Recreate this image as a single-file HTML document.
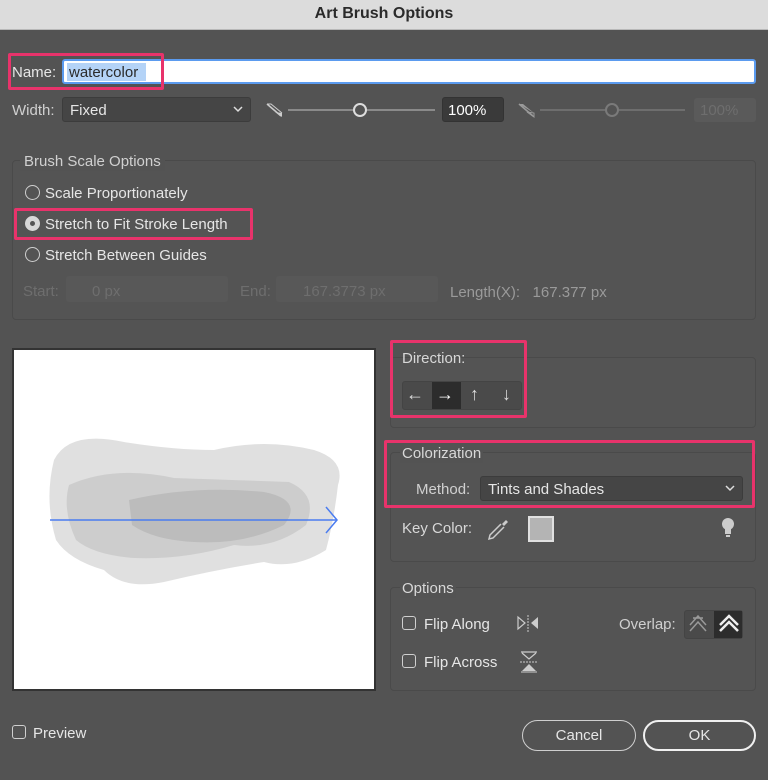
<!DOCTYPE html>
<html><head><meta charset="utf-8"><style>
*{margin:0;padding:0;box-sizing:border-box}
body{width:768px;height:780px;background:#535353;font-family:"Liberation Sans",sans-serif;color:#e6e6e6;position:relative;overflow:hidden;font-size:15px}
.a{position:absolute}
.t{position:absolute;white-space:nowrap;line-height:18px}
.pink{position:absolute;border:3px solid #e8336b;border-radius:2px}
.fs{position:absolute;border:1px solid #4a4a4a;border-radius:4px;background:#545454}
.radio{position:absolute;width:15px;height:15px;border:1.5px solid #cfcfcf;border-radius:50%}
.cb{position:absolute;width:14px;height:14px;border:1.5px solid #cfcfcf;border-radius:3px}
.dim{color:#6e6e6e}
.box{position:absolute;border-radius:3px}
</style></head><body>
<div class="a" style="left:0;top:0;width:768px;height:30px;background:#dcdcdc;border-bottom:1px solid #b8b8b8"></div>
<div class="t" style="left:0;width:768px;top:5px;text-align:center;color:#2a2a2a;font-weight:bold;font-size:16px">Art Brush Options</div>

<div class="t" style="left:12px;top:64px">Name:</div>
<div class="box" style="left:62px;top:59px;width:694px;height:25px;background:#fff;border:2px solid #5b9bef;border-radius:3px"></div>
<div class="a" style="left:67px;top:63px;width:79px;height:18px;background:#b4d3f7"></div>
<div class="t" style="left:69px;top:64px;color:#2a2a2a">watercolor</div>
<div class="pink" style="left:8px;top:53px;width:156px;height:37px"></div>

<div class="t" style="left:12px;top:102px;color:#d0d0d0">Width:</div>
<div class="box" style="left:62px;top:97px;width:189px;height:25px;background:#454545;border:1px solid #3c3c3c"></div>
<div class="t" style="left:70px;top:102px">Fixed</div>
<svg class="a" style="left:232px;top:104px" width="12" height="10"><path d="M2 3l4 4 4-4" stroke="#ddd" stroke-width="1.5" fill="none"/></svg>
<svg class="a" style="left:265px;top:101px" width="20" height="18"><path d="M2 3l14 12" stroke="#ccc" stroke-width="1.5"/><path d="M2 3h4l11 9" stroke="#ccc" fill="none"/><path d="M10 11l7 1v4z" fill="#ccc"/></svg>
<div class="a" style="left:288px;top:109px;width:147px;height:2px;background:#8a8a8a"></div>
<div class="a" style="left:353px;top:103px;width:14px;height:14px;border:2px solid #ddd;border-radius:50%;background:#535353"></div>
<div class="box" style="left:442px;top:97px;width:62px;height:25px;background:#3a3a3a;border:1px solid #333"></div>
<div class="t" style="left:448px;top:102px;color:#fff">100%</div>
<svg class="a" style="left:517px;top:101px" width="20" height="18"><path d="M2 3l4 0 11 9z" fill="#9a9a9a"/><path d="M2 3l14 12" stroke="#9a9a9a" stroke-width="1.5"/><path d="M10 11l7 1v4z" stroke="#9a9a9a" fill="none"/></svg>
<div class="a" style="left:540px;top:109px;width:145px;height:2px;background:#6e6e6e"></div>
<div class="a" style="left:605px;top:103px;width:14px;height:14px;border:2px solid #7a7a7a;border-radius:50%;background:#535353"></div>
<div class="box" style="left:694px;top:98px;width:62px;height:24px;background:#5a5a5a"></div>
<div class="t dim" style="left:700px;top:102px">100%</div>

<div class="fs" style="left:12px;top:160px;width:744px;height:160px"></div>
<div class="t" style="left:20px;top:153px;background:#535353;padding:0 4px;color:#d0d0d0">Brush Scale Options</div>
<div class="radio" style="left:25px;top:185px"></div>
<div class="t" style="left:45px;top:185px">Scale Proportionately</div>
<div class="radio" style="left:25px;top:216px;background:#d8d8d8;border-color:#d8d8d8"></div>
<div class="a" style="left:30px;top:221px;width:5px;height:5px;border-radius:50%;background:#555"></div>
<div class="t" style="left:45px;top:216px">Stretch to Fit Stroke Length</div>
<div class="pink" style="left:14px;top:208px;width:239px;height:32px"></div>
<div class="radio" style="left:25px;top:247px"></div>
<div class="t" style="left:45px;top:247px">Stretch Between Guides</div>
<div class="t dim" style="left:23px;top:283px">Start:</div>
<div class="box" style="left:66px;top:276px;width:162px;height:26px;background:#585858"></div>
<div class="t dim" style="left:92px;top:283px">0 px</div>
<div class="t dim" style="left:240px;top:283px">End:</div>
<div class="box" style="left:276px;top:276px;width:162px;height:26px;background:#585858"></div>
<div class="t dim" style="left:303px;top:283px">167.3773 px</div>
<div class="t" style="left:450px;top:284px;color:#9a9a9a">Length(X):&nbsp;&nbsp; 167.377 px</div>

<div class="a" style="left:12px;top:348px;width:364px;height:343px;background:#fff;border:2px solid #333"></div>
<svg class="a" style="left:14px;top:350px" width="360" height="339">
<g fill="#dadada" opacity="0.85">
<path d="M40 110 Q55 80 110 92 Q160 100 200 100 Q250 88 300 100 Q332 110 324 135 Q320 170 312 200 Q280 220 250 212 Q200 220 150 232 Q110 240 90 220 Q55 210 42 190 Q30 150 40 110z"/>
</g>
<g fill="#c8c8c8" opacity="0.8">
<path d="M55 135 Q100 115 160 128 Q220 130 275 132 Q305 145 292 175 Q260 200 220 195 Q170 210 120 208 Q80 205 62 190 Q48 160 55 135z"/>
</g>
<g fill="#b6b6b6" opacity="0.75">
<path d="M115 150 Q180 135 250 142 Q290 150 270 175 Q230 195 180 192 Q140 190 118 175z"/>
</g>
<path d="M36 170H323" stroke="#4a7cf0" stroke-width="1.5"/>
<path d="M312 157l11 13-11 13" stroke="#4a7cf0" stroke-width="1.5" fill="none"/>
</svg>

<div class="fs" style="left:390px;top:357px;width:366px;height:71px"></div>
<div class="t" style="left:402px;top:350px;color:#d8d8d8">Direction:</div>
<div class="box" style="left:402px;top:381px;width:120px;height:29px;background:#4a4a4a;border:1px solid #444"></div>
<div class="a" style="left:432px;top:382px;width:29px;height:27px;background:#2c2c2c"></div>
<div class="t" style="left:406px;top:385px;font-size:18px;color:#ddd">←</div>
<div class="t" style="left:436px;top:385px;font-size:18px;color:#fff">→</div>
<div class="t" style="left:470px;top:385px;font-size:18px;color:#ddd">↑</div>
<div class="t" style="left:502px;top:385px;font-size:18px;color:#ddd">↓</div>
<div class="pink" style="left:390px;top:340px;width:137px;height:78px"></div>

<div class="fs" style="left:390px;top:452px;width:366px;height:110px"></div>
<div class="t" style="left:400px;top:445px;color:#d8d8d8;background:#535353;padding:0 2px">Colorization</div>
<div class="t" style="left:416px;top:481px;color:#d0d0d0">Method:</div>
<div class="box" style="left:480px;top:476px;width:263px;height:25px;background:#454545;border:1px solid #3c3c3c"></div>
<div class="t" style="left:488px;top:481px">Tints and Shades</div>
<svg class="a" style="left:724px;top:483px" width="12" height="10"><path d="M2 3l4 4 4-4" stroke="#ddd" stroke-width="1.5" fill="none"/></svg>
<div class="pink" style="left:384px;top:440px;width:371px;height:68px"></div>
<div class="t" style="left:402px;top:520px;color:#d8d8d8">Key Color:</div>
<svg class="a" style="left:486px;top:517px" width="24" height="26"><path d="M20 3l2 2-4 4-2-2z" fill="#ccc"/><path d="M15 7L4 18l-1 4 4-1L18 10" stroke="#ccc" stroke-width="1.5" fill="none"/></svg>
<div class="a" style="left:528px;top:516px;width:26px;height:26px;background:#b4b4b4;border:2px solid #e0e0e0"></div>
<svg class="a" style="left:721px;top:517px" width="14" height="22"><circle cx="7" cy="7" r="6" fill="#ccc"/><rect x="4" y="12" width="6" height="5" fill="#ccc"/><rect x="5" y="18" width="4" height="2" fill="#ccc"/></svg>

<div class="fs" style="left:390px;top:587px;width:366px;height:104px"></div>
<div class="t" style="left:400px;top:580px;color:#d8d8d8;background:#535353;padding:0 2px">Options</div>
<div class="cb" style="left:402px;top:616px"></div>
<div class="t" style="left:424px;top:616px">Flip Along</div>
<svg class="a" style="left:515px;top:613px" width="26" height="22"><path d="M3 4v12l7-6z" stroke="#ccc" fill="none" stroke-width="1.2"/><path d="M13 2v18" stroke="#ccc" stroke-dasharray="2 1"/><path d="M23 4v12l-7-6z" fill="#ccc"/></svg>
<div class="t" style="left:619px;top:616px;color:#d0d0d0">Overlap:</div>
<div class="box" style="left:684px;top:610px;width:59px;height:29px;background:#4a4a4a;border:1px solid #444"></div>
<div class="a" style="left:714px;top:611px;width:28px;height:27px;background:#2c2c2c"></div>
<svg class="a" style="left:687px;top:613px" width="56" height="24"><path d="M3 18L11 9l8 9M3 12l8-9 8 9M6 5h10" stroke="#999" fill="none" stroke-width="1.5"/><path d="M33 18l9-9 9 9M33 12l9-9 9 9" stroke="#eee" fill="none" stroke-width="2.5"/></svg>
<div class="cb" style="left:402px;top:654px"></div>
<div class="t" style="left:424px;top:654px">Flip Across</div>
<svg class="a" style="left:518px;top:650px" width="22" height="24"><path d="M3 2h16M4 3l7 6 7-6" stroke="#ccc" fill="none" stroke-width="1.2"/><path d="M2 12h18" stroke="#ccc" stroke-dasharray="2 1"/><path d="M4 21l7-7 7 7z" fill="#ccc"/><path d="M3 22h16" stroke="#ccc"/></svg>

<div class="cb" style="left:12px;top:725px"></div>
<div class="t" style="left:33px;top:725px">Preview</div>
<div class="a" style="left:522px;top:720px;width:114px;height:31px;border:1.5px solid #cfcfcf;border-radius:16px"></div>
<div class="t" style="left:522px;top:727px;width:114px;text-align:center">Cancel</div>
<div class="a" style="left:643px;top:720px;width:113px;height:31px;border:2.5px solid #f0f0f0;border-radius:16px"></div>
<div class="t" style="left:643px;top:727px;width:113px;text-align:center">OK</div>
</body></html>
